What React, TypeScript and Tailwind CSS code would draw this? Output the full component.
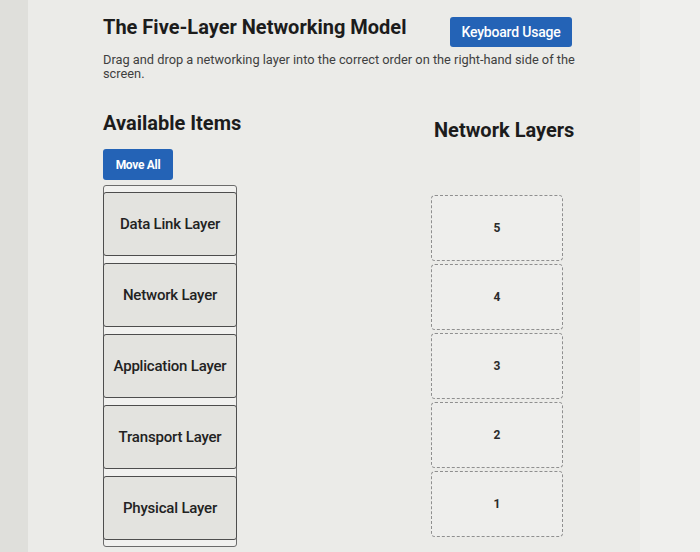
const items = [
  'Data Link Layer',
  'Network Layer',
  'Application Layer',
  'Transport Layer',
  'Physical Layer',
];

const slots = ['5', '4', '3', '2', '1'];

export default function App() {
  return (
    <div
      className="flex h-[552px] w-[700px] overflow-hidden bg-[#e4e4e0] text-[#1f1f1f]"
      style={{ fontFamily: 'Roboto, "Liberation Sans", sans-serif' }}
    >
      <div className="w-[28px] shrink-0 bg-[#dfdfdb]" />
      <div className="w-[612px] shrink-0 bg-[#ebebe8] pl-[75px] pr-[40px] pt-[15px]">
        <div className="flex items-start justify-between pr-[28px]">
          <h1 className="mt-[1px] text-[20px] font-bold leading-[22px] text-[#1c1c1c]">
            The Five-Layer Networking Model
          </h1>
          <button className="mt-[2px] flex h-[30px] w-[122px] items-center justify-center rounded-[3px] bg-[#2463b6] text-[14px] font-medium tracking-[-0.2px] text-white">
            Keyboard Usage
          </button>
        </div>
        <p className="mt-[6px] w-[475px] text-[12.8px] leading-[14px] text-[#3f3f3f]">
          Drag and drop a networking layer into the correct order on the right-hand side of the screen.
        </p>

        <div className="mt-[31px] flex">
          <div className="w-[134px]">
            <h2 className="whitespace-nowrap text-[20px] font-bold leading-[22px] text-[#1c1c1c]">
              Available Items
            </h2>
            <button className="mt-[15px] flex h-[31px] w-[70px] items-center justify-center rounded-[3px] bg-[#2463b6] text-[12px] font-bold tracking-[-0.3px] text-white">
              Move All
            </button>
            <div className="mt-[5px] flex flex-col gap-[7px] rounded-[3px] border border-[#6b6b6b] bg-[#f1f1ef] pb-[6px] pt-[6px]">
              {items.map((t) => (
                <div
                  key={t}
                  className="-mx-px flex h-[64px] items-center justify-center rounded-[3px] border border-[#4d4d4d] bg-[#e3e3df] text-[15px] font-medium tracking-[-0.2px] text-[#222]"
                >
                  {t}
                </div>
              ))}
            </div>
          </div>

          <div className="ml-[197px] w-[145px]">
            <h2 className="mt-[7px] whitespace-nowrap text-[20px] font-bold leading-[22px] text-[#1c1c1c]">
              Network Layers
            </h2>
            <div className="ml-[-3px] mt-[54px] flex w-[132px] flex-col gap-[3px]">
              {slots.map((n) => (
                <div
                  key={n}
                  className="flex h-[66px] items-center justify-center rounded-[4px] border border-dashed border-[#8f8f8f] bg-[#eeeeec] text-[12px] font-bold text-[#2a2a2a]"
                >
                  {n}
                </div>
              ))}
            </div>
          </div>
        </div>
      </div>
      <div className="flex-1 bg-[#efefed]" />
    </div>
  );
}
